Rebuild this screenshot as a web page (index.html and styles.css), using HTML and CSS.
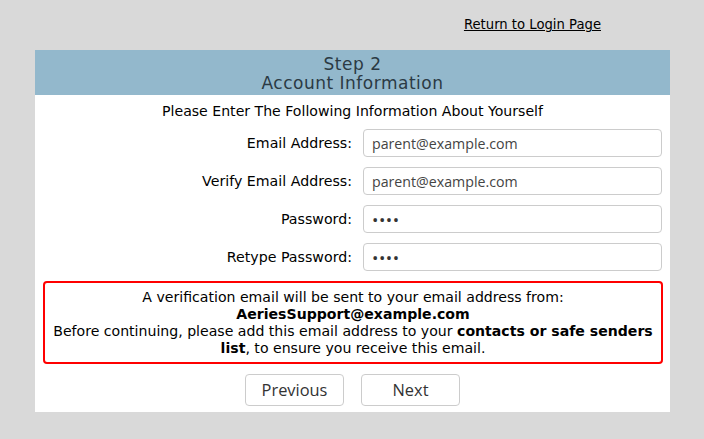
FILE: index.html
```html
<!DOCTYPE html>
<html>
<head>
<meta charset="utf-8">
<link rel="stylesheet" href="styles.css">
</head>
<body>
<div class="top">
  <a class="return" href="#">Return to Login Page</a>
</div>
<div class="panel">
  <div class="head">
    <div>Step 2</div>
    <div>Account Information</div>
  </div>
  <div class="intro">Please Enter The Following Information About Yourself</div>
  <div class="form">
    <label>Email Address:</label>
    <input class="field" type="text" value="parent@example.com">
    <label>Verify Email Address:</label>
    <input class="field" type="text" value="parent@example.com">
    <label>Password:</label>
    <input class="field pw" type="password" value="abcd">
    <label>Retype Password:</label>
    <input class="field pw" type="password" value="abcd">
  </div>
  <div class="notice">
    A verification email will be sent to your email address from:<br>
    <b>AeriesSupport@example.com</b><br>
    Before continuing, please add this email address to your <b>contacts or safe senders list</b>, to ensure you receive this email.
  </div>
  <div class="buttons">
    <button class="btn">Previous</button>
    <button class="btn">Next</button>
  </div>
</div>
</body>
</html>
```
FILE: styles.css
```css
html, body {
  margin: 0;
  padding: 0;
  background: #d9d9d9;
  font-family: "DejaVu Sans", Verdana, sans-serif;
  color: #000;
}
.top {
  display: flex;
  justify-content: flex-end;
  padding: 17px 103px 0 0;
  height: 34px;
  box-sizing: border-box;
}
.return {
  font-size: 13.2px;
  line-height: 16px;
  color: #000;
  text-decoration: underline;
}
.panel {
  margin: 16px 34px 0 35px;
  background: #fff;
  height: 362px;
  box-sizing: border-box;
}
.head {
  background: #93b8cc;
  color: #2b3a44;
  font-size: 17px;
  line-height: 19px;
  text-align: center;
  padding: 5px 0 2px;
  letter-spacing: 0.5px;
}
.intro {
  text-align: center;
  font-size: 14.1px;
  padding: 8px 0 0;
  height: 27px;
  box-sizing: border-box;
}
.form {
  display: grid;
  grid-template-columns: 317px 299px;
  column-gap: 11px;
  row-gap: 10px;
  align-items: center;
  margin-top: 7px;
}
.form label {
  text-align: right;
  font-size: 14.2px;
}
.field {
  height: 28px;
  box-sizing: border-box;
  border: 1px solid #ccc;
  border-radius: 4px;
  padding: 0 8px;
  font-family: "Open Sans", sans-serif;
  font-size: 14.2px;
  color: #444;
  outline: none;
}
.pw {
  letter-spacing: 0.5px;
  font-size: 17px;
  color: #333;
}
.notice {
  margin: 10px 7px 0 8px;
  border: 2px solid #f00;
  border-radius: 4px;
  text-align: center;
  font-size: 14.1px;
  line-height: 17px;
  padding: 6px 4px 5px;
}
.buttons {
  display: flex;
  justify-content: center;
  gap: 17px;
  margin-top: 10px;
}
.btn {
  width: 99px;
  height: 32px;
  padding: 0 0 2px;
  background: #fff;
  border: 1px solid #ccc;
  border-radius: 4px;
  font-family: "Open Sans", sans-serif;
  font-size: 16.4px;
  color: #333;
}
```
